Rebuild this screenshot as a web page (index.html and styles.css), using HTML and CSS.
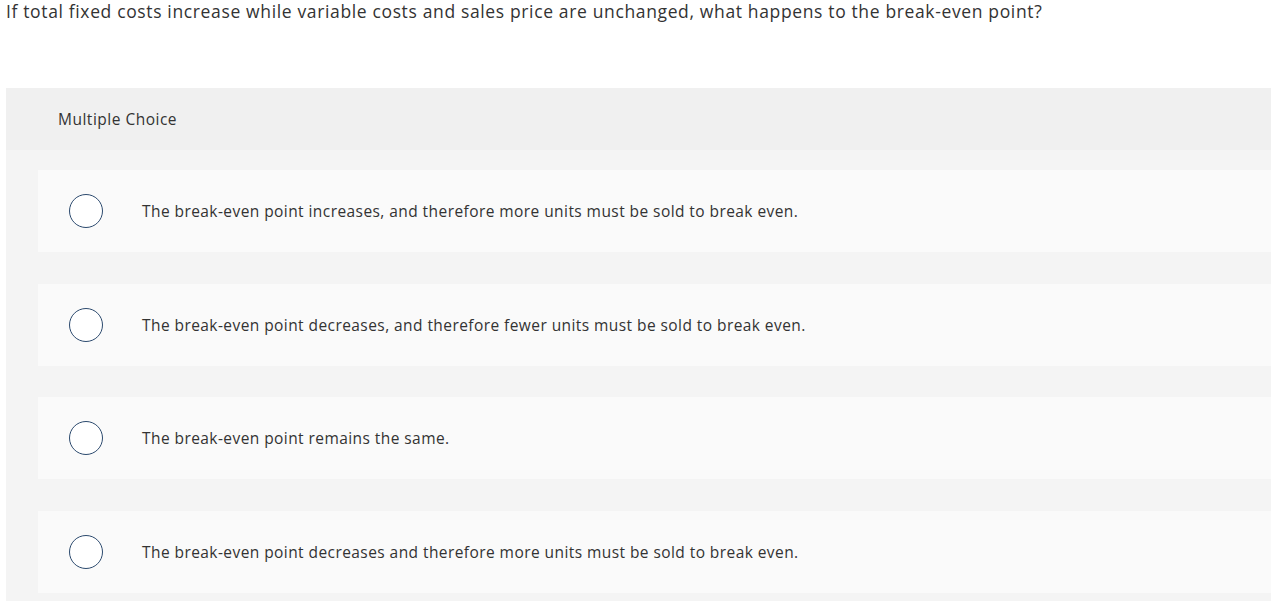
FILE: index.html
```html
<!DOCTYPE html>
<html>
<head>
<meta charset="utf-8">
<link rel="stylesheet" href="styles.css">
</head>
<body>
<div class="page">
  <p class="question">If total fixed costs increase while variable costs and sales price are unchanged, what happens to the break-even point?</p>
  <div class="panel">
    <div class="panel-head">Multiple Choice</div>
    <div class="panel-body">
      <div class="option"><span class="radio"></span><span class="label">The break-even point increases, and therefore more units must be sold to break even.</span></div>
      <div class="option"><span class="radio"></span><span class="label">The break-even point decreases, and therefore fewer units must be sold to break even.</span></div>
      <div class="option"><span class="radio"></span><span class="label">The break-even point remains the same.</span></div>
      <div class="option"><span class="radio"></span><span class="label">The break-even point decreases and therefore more units must be sold to break even.</span></div>
    </div>
  </div>
</div>
</body>
</html>
```
FILE: styles.css
```css
html, body {
  margin: 0;
  padding: 0;
  background: #ffffff;
  overflow: hidden;
}
.page {
  padding-left: 6px;
  font-family: "Open Sans", "Liberation Sans", sans-serif;
  color: #333333;
}
.question {
  margin: 0;
  padding-top: 0;
  font-size: 17.5px;
  letter-spacing: 0.64px;
  line-height: 22px;
  color: #333333;
  white-space: nowrap;
}
.panel {
  margin-top: 66px;
  width: 1300px;
}
.panel-head {
  background: #f0f0f0;
  height: 62px;
  padding-left: 52px;
  display: flex;
  align-items: center;
  font-size: 15.5px;
  letter-spacing: 0.5px;
  color: #333333;
}
.panel-body {
  background: #f4f4f4;
  padding: 20px 0 20px 32px;
  display: flex;
  flex-direction: column;
  gap: 31.5px;
}
.option {
  background: #fafafa;
  height: 82px;
  display: flex;
  align-items: center;
}
.radio {
  width: 34px;
  height: 34px;
  box-sizing: border-box;
  border: 1.3px solid #2c4a6e;
  border-radius: 50%;
  background: #ffffff;
  margin-left: 31px;
  flex: none;
}
.label {
  margin-left: 39px;
  font-size: 15.5px;
  letter-spacing: 0.43px;
  color: #333333;
  white-space: nowrap;
}
```
